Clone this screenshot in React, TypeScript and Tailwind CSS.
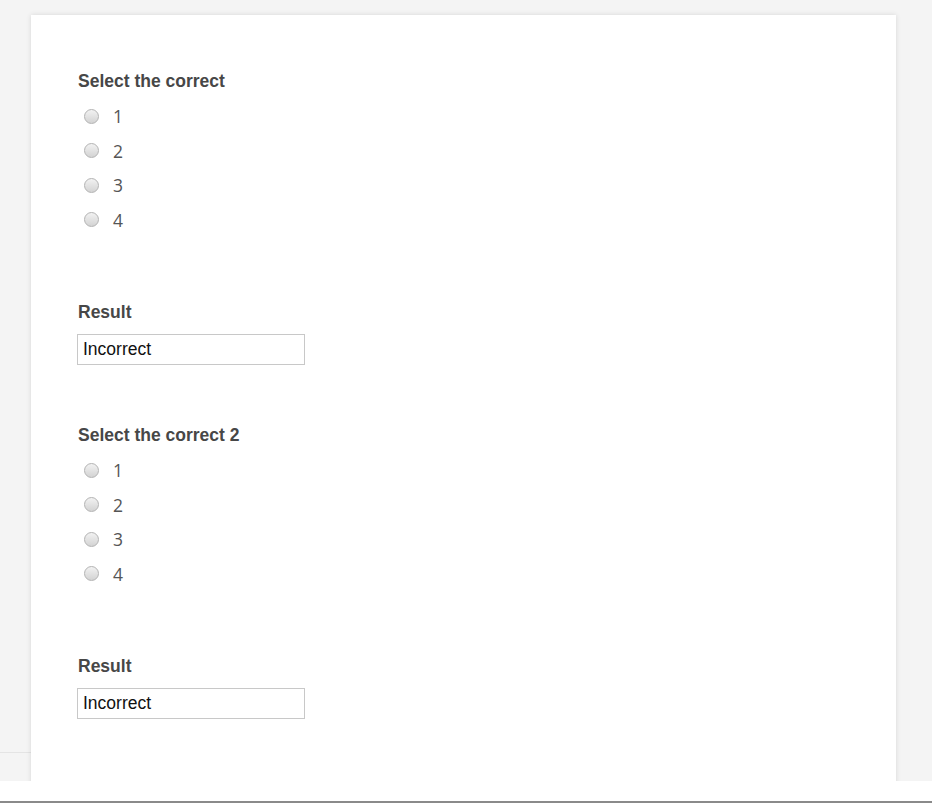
const options = ["1", "2", "3", "4"]

const Radio = ({ label }: { label: string }) => {
    return (
        <label className="flex items-center h-[34.5px] pl-[6px]">
            <span className="w-[15px] h-[15px] rounded-full border border-[#b3b3b3] bg-gradient-to-b from-[#f2f2f2] to-[#d3d3d3]" />
            <span className="ml-[14px] text-[17.5px] text-[#555] font-['Open_Sans',sans-serif]">{label}</span>
        </label>
    )
}

const Question = ({ title }: { title: string }) => {
    return (
        <div>
            <h3 className="text-[17.5px] leading-[20px] font-bold text-[#474747]">{title}</h3>
            <div className="mt-[8px]">
                {options.map((o) => (
                    <Radio key={o} label={o} />
                ))}
            </div>
            <h3 className="mt-[65px] text-[17.5px] leading-[20px] font-bold text-[#474747]">Result</h3>
            <input
                readOnly
                value="Incorrect"
                className="mt-[12px] -ml-px block w-[228px] h-[31px] border border-[#c8c8c8] px-[5px] text-[17.5px] text-[#111] outline-none"
            />
        </div>
    )
}

const App = () => {
    return (
        <div className="relative h-[803px] overflow-hidden bg-[#f4f4f4] font-['Liberation_Sans',Arial,sans-serif]">
            {/* faint line behind the card */}
            <div className="absolute top-[752px] left-0 w-[31px] h-px bg-[#e4e4e4]" />

            <div className="relative ml-[31px] mt-[15px] w-[865px] min-h-[900px] bg-white shadow-[0_0_5px_rgba(0,0,0,0.12)] pl-[47px] pt-[56px]">
                <div className="flex flex-col gap-[60px]">
                    <Question title="Select the correct" />
                    <Question title="Select the correct 2" />
                    <Question title="Select the correct 3" />
                </div>
            </div>

            {/* bottom bar */}
            <div className="absolute bottom-0 left-0 right-0 h-[22px] bg-white border-b-2 border-[#8a8a8a]" />
        </div>
    )
}

export default App
